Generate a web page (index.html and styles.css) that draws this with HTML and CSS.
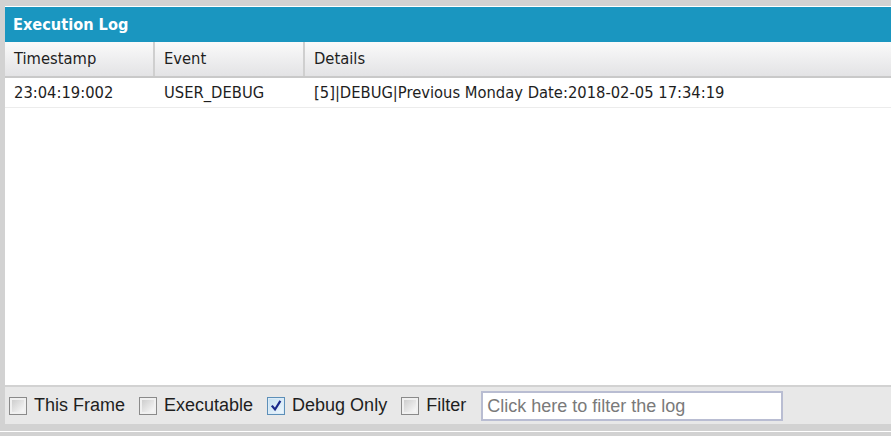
FILE: index.html
```html
<!DOCTYPE html>
<html>
<head>
<meta charset="utf-8">
<link rel="stylesheet" href="styles.css">
</head>
<body>
<div class="window">
  <div class="panel">
    <div class="title">Execution Log</div>
    <div class="grid">
      <div class="head-row">
        <div class="cell col-ts">Timestamp</div>
        <div class="cell col-ev">Event</div>
        <div class="cell col-dt">Details</div>
      </div>
      <div class="row">
        <div class="cell col-ts">23:04:19:002</div>
        <div class="cell col-ev">USER_DEBUG</div>
        <div class="cell col-dt">[5]|DEBUG|Previous Monday Date:2018-02-05 17:34:19</div>
      </div>
    </div>
    <div class="footer">
      <label class="opt"><span class="box"></span>This Frame</label>
      <label class="opt"><span class="box"></span>Executable</label>
      <label class="opt"><span class="box checked"><svg viewBox="0 0 12 12" width="12" height="12"><path d="M2.5 6.5 L5 9.5 L9.8 1.8" fill="none" stroke="#1a2a8c" stroke-width="2.2" stroke-linecap="square"/></svg></span>Debug Only</label>
      <label class="opt"><span class="box"></span>Filter</label>
      <div class="filter">Click here to filter the log</div>
    </div>
  </div>
  <div class="bottom"></div>
</div>
</body>
</html>
```

FILE: styles.css
```css
html, body {
  margin: 0;
  padding: 0;
  background: #ffffff;
}
.window {
  width: 891px;
  height: 436px;
  background: #d2d2d2;
  padding: 6px 0 0 5px;
  box-sizing: border-box;
  display: flex;
  flex-direction: column;
  overflow: hidden;
}
.panel {
  display: flex;
  flex-direction: column;
  border-top: 1px solid #ffffff;
  height: 417px;
  background: #ffffff;
}
.title {
  height: 35px;
  background: #1a96c0;
  color: #ffffff;
  font-family: "DejaVu Sans Condensed", "DejaVu Sans", sans-serif;
  font-weight: bold;
  font-size: 16.2px;
  line-height: 35px;
  padding-left: 8px;
  flex: none;
}
.grid {
  flex: 1;
  background: #ffffff;
  font-family: "DejaVu Sans Condensed", "DejaVu Sans", sans-serif;
  font-size: 16.4px;
  color: #1e1e1e;
}
.head-row {
  display: flex;
  height: 34px;
  background: linear-gradient(#fafafa, #e3e3e5);
  border-bottom: 2px solid #c9c9c9;
}
.head-row .cell {
  line-height: 34px;
  border-right: 2px solid #cfcfcf;
  box-sizing: border-box;
}
.head-row .col-dt {
  border-right: none;
}
.row {
  display: flex;
  height: 29px;
  border-bottom: 1px solid #ececec;
}
.row .cell {
  line-height: 29px;
}
.cell {
  padding-left: 9px;
  white-space: nowrap;
  box-sizing: border-box;
}
.col-ts { width: 150px; }
.col-ev { width: 150px; }
.col-dt { flex: 1; }
.footer {
  flex: none;
  height: 37px;
  background: #e8e8e8;
  border-top: 2px solid #d2d2d2;
  display: flex;
  align-items: center;
  padding-left: 4px;
  font-family: "Liberation Sans", Arial, sans-serif;
  font-size: 18px;
  color: #1e1e1e;
}
.opt {
  display: flex;
  align-items: center;
  margin-right: 14px;
}
.box {
  width: 16px;
  height: 16px;
  border: 1px solid #8a8a8a;
  background: linear-gradient(135deg, #c6c6c6, #f4f4f4 80%);
  box-shadow: inset 0 0 0 2px #f0f0f0;
  margin-right: 7px;
  display: flex;
  align-items: center;
  justify-content: center;
  flex: none;
}
.box.checked {
  border-color: #5c8fb8;
  background: linear-gradient(135deg, #c4dff2, #eef7fd);
  box-shadow: inset 0 0 0 1px #dcebf7;
}
.filter {
  width: 294px;
  height: 26px;
  border: 2px solid #b9bdd2;
  background: #ffffff;
  color: #7a7a7a;
  line-height: 26px;
  padding-left: 4px;
  margin-left: 1px;
  white-space: nowrap;
}
.bottom {
  height: 7px;
  background: #d2d2d2;
  margin-left: -5px;
  border-bottom: 1px solid #ffffff;
  flex: none;
}
```
